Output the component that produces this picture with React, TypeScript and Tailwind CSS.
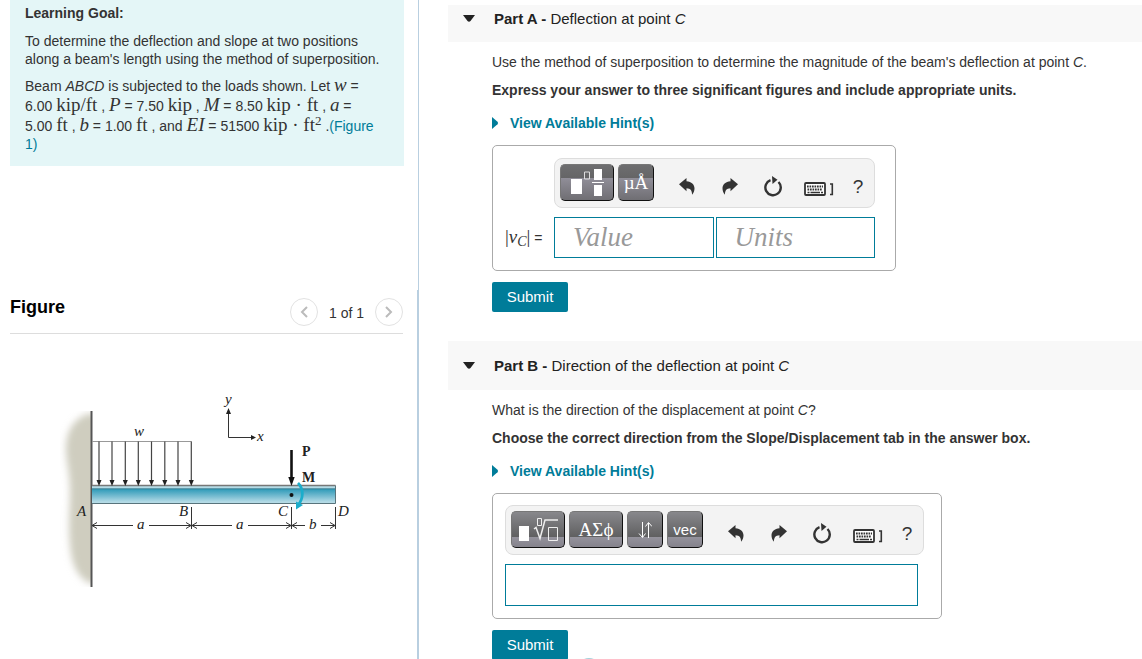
import { ReactNode } from "react";
import clsx from "clsx";

function Math({ children, italic }: { children: ReactNode; italic?: boolean }) {
  return (
    <span
      className={clsx(
        "font-['Liberation_Serif',serif] text-[19px] leading-none",
        italic && "italic"
      )}
    >
      {children}
    </span>
  );
}

function UndoIcon({ flip }: { flip?: boolean }) {
  return (
    <svg
      viewBox="0 0 16 17"
      className={clsx("h-[17px] w-4", flip && "-scale-x-100")}
      fill="#333"
    >
      <path d="M0 6.300 7.500 0v3.200c5 .4 8 3.200 8 7.300 0 2.200-.8 4.200-2.400 6.200 0-3.800-1.400-6.400-5.600-6.500v3z" />
    </svg>
  );
}

function ResetIcon() {
  return (
    <svg viewBox="0 0 20 21" className="h-[21px] w-5">
      <path
        d="M7.500 4.200A7.700 7.700 0 1 0 15.500 6"
        fill="none"
        stroke="#333"
        strokeWidth="2.400"
      />
      <path d="M9 0 14.500 3.800 9.500 8z" fill="#333" />
    </svg>
  );
}

function KeyboardIcon() {
  return (
    <svg viewBox="0 0 30 14" className="h-[14px] w-[30px]">
      <rect x="1" y="1" width="20" height="12" rx="1" fill="#fff" stroke="#333" strokeWidth="1.800" />
      <path
        d="M3 4.500h16M3.500 7.500h15"
        stroke="#333"
        strokeWidth="2"
        strokeDasharray="1.700 .8"
      />
      <path d="M3.500 10.500h2M6.500 10.500h9.500M17 10.500h2" stroke="#333" strokeWidth="1.600" />
      <path d="M26 2h2.300v10.500H26" fill="none" stroke="#333" strokeWidth="1.600" />
    </svg>
  );
}

function EditActions() {
  const cell = "flex h-full w-[43px] items-center justify-center";
  return (
    <div className="ml-[7px] flex h-[37px] items-center pt-2">
      <button aria-label="Undo" className={cell}>
        <UndoIcon />
      </button>
      <button aria-label="Redo" className={cell}>
        <UndoIcon flip />
      </button>
      <button aria-label="Reset" className={cell}>
        <ResetIcon />
      </button>
      <button
        aria-label="Keyboard shortcuts"
        className="flex h-full w-[50px] items-center justify-center pt-1"
      >
        <KeyboardIcon />
      </button>
      <button aria-label="Help" className="w-7 text-center text-[19px] leading-5 text-[#333]">
        ?
      </button>
    </div>
  );
}

type ToolButtonProps = {
  label: string;
  wide?: boolean;
  low?: boolean; // where the shine of the button breaks
  children: ReactNode;
};

function ToolButton({ label, wide, low, children }: ToolButtonProps) {
  return (
    <button
      aria-label={label}
      className={clsx(
        "flex h-[37px] items-center justify-center rounded-[5px] border border-t-[#777] border-r-[#111] border-b-[#111] border-l-[#777] font-['Liberation_Serif',serif] text-[19px] leading-none text-white",
        wide ? "w-[54px]" : "w-9",
        low
          ? "bg-[linear-gradient(#88888c_0%,#5f5f60_72%,#94929c_72%,#85838c_100%)]"
          : "bg-[linear-gradient(#6e6e70_0%,#656566_36%,#918f99_36%,#6f6e73_100%)]"
      )}
    >
      {children}
    </button>
  );
}

function Toolbar({ children }: { children: ReactNode }) {
  return (
    <div className="flex h-[50px] items-start gap-1 rounded-lg border border-[#ddd] bg-[#f3f3f3] pt-[5px] pr-[2px] pl-[5px]">
      {children}
      <EditActions />
    </div>
  );
}

type PartProps = {
  name: string;
  title: string;
  first?: boolean;
  question: ReactNode;
  instruction: string;
  children: ReactNode;
};

function Part({ name, title, first, question, instruction, children }: PartProps) {
  return (
    <section>
      <header
        className={clsx(
          "flex items-center bg-[#f8f8f8] pl-[15px]",
          first ? "h-[37px] pb-[10px]" : "h-[49px]"
        )}
      >
        <button aria-label={`Collapse ${name}`} className="w-[31px]">
          <svg viewBox="0 0 12 7" className="h-[7px] w-3" fill="#222">
            <path d="M0 0h12L7.500 6q-1.500 1.500-3 0z" />
          </svg>
        </button>
        <h2 className="text-[15px] leading-5 text-[#222]">
          <b>{name} -</b> {title} <i>C</i>
        </h2>
      </header>
      <div className="pt-[11px] pl-11">
        <p>{question}</p>
        <p className="mt-[10px] font-bold">{instruction}</p>
        <button className="mt-[15px] flex items-center font-bold text-[#007c99]">
          <svg viewBox="0 0 7 12" className="mr-[11px] h-3 w-[7px]" fill="#007c99">
            <path d="M0 0 5.500 4.800q1.200 1.200 0 2.400L0 12z" />
          </svg>
          View Available Hint(s)
        </button>
        {children}
        <div className="mt-[11px] flex items-start gap-[9px]">
          <button className="h-[30px] w-[76px] rounded-[2px] bg-[#007c99] text-[15px] text-white">
            Submit
          </button>
          {!first && (
            <span className="mt-7 h-6 w-6 rounded-full border-2 border-[#a5d0db]" />
          )}
        </div>
      </div>
    </section>
  );
}

const loadArrows = [99, 112, 125.300, 138.300, 151.500, 164.800, 178, 191.300];

function BeamFigure() {
  return (
    <svg
      viewBox="60 392 300 200"
      className="ml-[50px] h-[200px] w-[300px]"
      fontFamily="'Liberation Serif', serif"
      fill="#222"
    >
      <defs>
        <linearGradient id="beam" x1="0" y1="0" x2="0" y2="1">
          <stop offset="0" stopColor="#2e9ab8" />
          <stop offset=".6" stopColor="#7dbfd3" />
          <stop offset="1" stopColor="#b4dbe6" />
        </linearGradient>
        <filter id="soft" x="-30%" y="-10%" width="160%" height="120%">
          <feGaussianBlur stdDeviation="3.500" />
        </filter>
        <clipPath id="wallClip">
          <path d="M60 411h31v176H60z" />
        </clipPath>
      </defs>
      <g clipPath="url(#wallClip)">
        <path
          d="M100 414H87C72 420 65 434 66 452c1 14 4 22 4 40 0 16-2 34 0 54 2 20 8 31 19 37h11z"
          fill="#cfcdbf"
          filter="url(#soft)"
        />
      </g>
      <path d="M91.500 411v176" stroke="#555" strokeWidth="2" />

      {/* beam */}
      <path d="M92 485.500h243.500v18H92z" fill="#b4dbe6" />
      <path d="M92 489h243v13H92z" fill="url(#beam)" />
      <path d="M92 485.500h243.500" stroke="#777" strokeWidth="1.300" />
      <path d="M92 488.800h243.500" stroke="#3b7f92" />
      <path d="M92 503.500h243.500v-18" fill="none" stroke="#58747c" />

      {/* distributed load */}
      <path d="M92 441.500h99.500" stroke="#999" />
      {loadArrows.map((x) => (
        <g key={x}>
          <path d={`M${x} 441.500v40`} stroke="#444" strokeWidth="1.200" />
          <path d={`M${x - 2.500} 480h5l-2.500 6z`} />
        </g>
      ))}

      {/* axes */}
      <path d="M228.500 412v25.500H252" fill="none" stroke="#333" />
      <path d="M226 414h5l-2.500-6zM251 435v5l5-2.500z" />

      {/* force and moment */}
      <path d="M291.500 450v28" stroke="#111" strokeWidth="2.600" />
      <path d="M288.300 477h6.400l-3.200 9z" fill="#111" />
      <path d="M298 483c6 6 5.500 16 0 22" fill="none" stroke="#1badcb" strokeWidth="2.800" />
      <path d="M296 509.500v-8l7 3.500z" fill="#1badcb" />
      <circle cx="291.500" cy="495" r="2" fill="#111" />

      {/* dimensions */}
      <g fill="none" stroke="#333">
        <path d="M191.500 507v22M291.500 507v22M335.500 507v22" />
        <path d="M92 525.500h41M149 525.500h83M248 525.500h57M321 525.500h14" />
        <path d="m97 522.500-5 3 5 3M186 522.500l5 3-5 3M197 522.500l-5 3 5 3M286 522.500l5 3-5 3M297 522.500l-5 3 5 3M330 522.500l5 3-5 3" />
      </g>
      <g fontSize="15" fontStyle="italic">
        <text x="134" y="436">w</text>
        <text x="225" y="404">y</text>
        <text x="257" y="441">x</text>
        <text x="77" y="516">A</text>
        <text x="179" y="516">B</text>
        <text x="278" y="516">C</text>
        <text x="338" y="516">D</text>
        <text x="137" y="529">a</text>
        <text x="236" y="529">a</text>
        <text x="309" y="529">b</text>
      </g>
      <g fontSize="14" fontWeight="bold">
        <text x="302" y="456">P</text>
        <text x="302" y="482">M</text>
      </g>
    </svg>
  );
}

export default function App() {
  const pager =
    "flex h-7 w-7 items-center justify-center rounded-full border border-[#e2e2e2]";
  const field =
    "h-[41px] w-0 flex-1 border border-[#007c99] bg-white px-[18px] font-['Liberation_Serif',serif] text-[27px] italic placeholder:text-[#999]";

  return (
    <main className="grid h-screen grid-cols-[419fr_723fr] overflow-hidden bg-white font-['Liberation_Sans',sans-serif] text-sm leading-[18px] text-[#333]">
      <aside className="flex flex-col">
        <div className="h-[290px] border-r border-[#b9cfe0] pr-[14px] pl-[10px]">
          <div className="bg-[#e4f6f7] px-[15px] pt-1 pb-[13px]">
            <h2 className="font-bold">Learning Goal:</h2>
            <p className="mt-[10px]">
              To determine the deflection and slope at two positions along a
              beam's length using the method of superposition.
            </p>
            <p className="mt-[7px] whitespace-nowrap">
              Beam <i>ABCD</i> is subjected to the loads shown. Let{" "}
              <Math italic>w</Math> =<br />
              6.00 <Math>kip/ft</Math> , <Math italic>P</Math> = 7.50{" "}
              <Math>kip</Math> , <Math italic>M</Math> = 8.50{" "}
              <Math>kip · ft</Math> , <Math italic>a</Math> =<br />
              5.00 <Math>ft</Math> , <Math italic>b</Math> = 1.00 <Math>ft</Math>{" "}
              , and <Math italic>EI</Math> = 51500{" "}
              <Math>
                kip · ft<sup className="text-[13px]">2</sup>
              </Math>{" "}
              .
              <a href="#figure" className="text-[#007c99]">
                (Figure
                <br />
                1)
              </a>
            </p>
          </div>
        </div>
        <div
          id="figure"
          className="flex-1 border-r-2 border-[#b9cfe0] pr-[14px] pl-[10px]"
        >
          <div className="flex h-11 items-center border-b border-[#ddd]">
            <h2 className="flex-1 pb-[10px] text-lg font-bold text-black">Figure</h2>
            <button aria-label="Previous figure" className={pager}>
              <svg viewBox="0 0 8 12" className="h-3 w-2" fill="none" stroke="#bbb" strokeWidth="2">
                <path d="M7 1 2 6l5 5" />
              </svg>
            </button>
            <span className="mx-[11px] pt-[2px]">1 of 1</span>
            <button aria-label="Next figure" className={pager}>
              <svg viewBox="0 0 8 12" className="h-3 w-2" fill="none" stroke="#bbb" strokeWidth="2">
                <path d="m1 1 5 5-5 5" />
              </svg>
            </button>
          </div>
          <div className="pt-[58px]">
            <BeamFigure />
          </div>
        </div>
      </aside>

      <div className="flex flex-col gap-[29px] pt-[5px] pl-[29px]">
        <Part
          first
          name="Part A"
          title="Deflection at point"
          question={
            <>
              Use the method of superposition to determine the magnitude of the
              beam's deflection at point <i>C</i>.
            </>
          }
          instruction="Express your answer to three significant figures and include appropriate units."
        >
          <div className="mt-[13px] grid w-fit grid-cols-[49px_auto] gap-y-[9px] rounded-[5px] border border-[#aaa] px-3 pt-3 pr-5 pb-3">
            <div className="col-start-2">
              <Toolbar>
                <ToolButton label="Templates" wide>
                  <svg viewBox="0 0 34 28" className="h-7 w-[34px]" fill="#fff">
                    <path d="M1 10h11v15H1zM24 0h8v11h-8zM24 16h8v11h-8zM22 13h12v1H22z" />
                    <path d="M14.500 3h5v7h-5z" fill="none" stroke="#ddd" />
                  </svg>
                </ToolButton>
                <ToolButton label="Symbols">µÅ</ToolButton>
              </Toolbar>
            </div>
            <label htmlFor="value" className="self-center whitespace-nowrap">
              <Math>|</Math>
              <Math italic>v</Math>
              <sub className="font-['Liberation_Serif',serif] text-sm italic">C</sub>
              <Math>|</Math> =
            </label>
            <div className="flex gap-[2px]">
              <input id="value" placeholder="Value" className={field} />
              <input aria-label="Units" placeholder="Units" className={field} />
            </div>
          </div>
        </Part>

        <Part
          name="Part B"
          title="Direction of the deflection at point"
          question={
            <>
              What is the direction of the displacement at point <i>C</i>?
            </>
          }
          instruction="Choose the correct direction from the Slope/Displacement tab in the answer box."
        >
          <div className="mt-[13px] flex w-fit flex-col gap-[9px] rounded-[5px] border border-[#aaa] pt-[11px] pr-[17px] pb-3 pl-3">
            <Toolbar>
              <ToolButton label="Templates" wide low>
                <svg viewBox="0 0 42 26" className="h-[26px] w-[42px]" fill="none" stroke="#eee">
                  <path d="M2 9h10v15H2z" fill="#fff" stroke="none" />
                  <path d="M20.500 1.500h4v7h-4zM31.500 10.500h9v13h-9z" />
                  <path d="m17 12 2-1.500 4 11 5-18.500h13" strokeWidth="1.500" />
                </svg>
              </ToolButton>
              <ToolButton label="Greek letters" wide low>
                ΑΣϕ
              </ToolButton>
              <ToolButton label="Slope/Displacement" low>
                <svg viewBox="0 0 14 18" className="h-[18px] w-[14px]" fill="none" stroke="#fff">
                  <path d="M4.500 1v15M1 12.500l3.500 4 3-4M10.500 17V2M7.500 5.500l3-4 3.500 4" />
                </svg>
              </ToolButton>
              <ToolButton label="Vector" low>
                <span className="font-['Liberation_Sans',sans-serif] text-[15px]">vec</span>
              </ToolButton>
            </Toolbar>
            <input
              aria-label="Answer"
              className="mr-[6px] h-[42px] border border-[#007c99] px-[18px] text-lg"
            />
          </div>
        </Part>
      </div>
    </main>
  );
}
